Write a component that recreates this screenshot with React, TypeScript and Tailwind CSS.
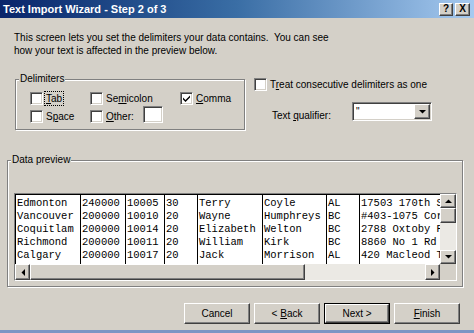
import React from "react"

const rows = [
  ["Edmonton", "240000", "10005", "30", "Terry", "Coyle", "AL", "17503 170th St"],
  ["Vancouver", "200000", "10010", "20", "Wayne", "Humphreys", "BC", "#403-1075 Cornwall"],
  ["Coquitlam", "200000", "10014", "20", "Elizabeth", "Welton", "BC", "2788 Oxtoby Pl"],
  ["Richmond", "200000", "10011", "20", "William", "Kirk", "BC", "8860 No 1 Rd"],
  ["Calgary", "200000", "10017", "20", "Jack", "Morrison", "AL", "420 Macleod Tr"],
]

const colWidths = ["w-[65px]", "w-[45px]", "w-[39px]", "w-[33px]", "w-[65px]", "w-[64px]", "w-[33px]", "flex-1"]

const raised =
  "bg-[#d4d0c8] border border-t-white border-l-white border-r-[#404040] border-b-[#404040] shadow-[inset_-1px_-1px_0_#808080]"

function Check({ checked }: { checked?: boolean }) {
  return (
    <span className="w-[13px] h-[13px] shrink-0 bg-white border border-t-[#808080] border-l-[#808080] border-r-white border-b-white shadow-[inset_1px_1px_0_#404040,inset_-1px_-1px_0_#d4d0c8] flex items-center justify-center">
      {checked && (
        <svg width="7" height="7" viewBox="0 0 7 7">
          <path d="M0 2.5 L2.5 5 L7 0.5 L7 2.5 L2.5 7 L0 4.5 Z" fill="#000" />
        </svg>
      )}
    </span>
  )
}

function Arrow({ dir }: { dir: "up" | "down" | "left" | "right" }) {
  const pts = {
    up: "0,4 7,4 3.5,0.5",
    down: "0,0 7,0 3.5,3.5",
    left: "4,0 4,7 0.5,3.5",
    right: "0,0 0,7 3.5,3.5",
  }[dir]
  const vertical = dir === "up" || dir === "down"
  return (
    <svg width={vertical ? 7 : 4} height={vertical ? 4 : 7} viewBox={vertical ? "0 0 7 4" : "0 0 4 7"}>
      <polygon points={pts} fill="#000" />
    </svg>
  )
}

function GroupLabel({ children }: { children: React.ReactNode }) {
  return (
    <span className="absolute -top-[8px] left-[3px] px-[1px] bg-[#d4d0c8] leading-[13px]">{children}</span>
  )
}

export default function App() {
  return (
    <div className="w-[474px] h-[333px] bg-[#d4d0c8] overflow-hidden flex flex-col text-black text-[10px] font-['Liberation_Sans',Arial,sans-serif]">
      {/* Title bar */}
      <div className="h-[18px] shrink-0 flex items-center pl-[3px] pr-[4px] bg-linear-to-r from-[#0a246a] via-[#3a6ea5] to-[#a6caf0]">
        <span className="flex-1 text-white font-bold text-[11px] leading-none">Text Import Wizard - Step 2 of 3</span>
        <span className={`w-[14px] h-[13px] flex items-center justify-center font-bold text-[10px] leading-none ${raised}`}>?</span>
        <span className={`ml-[2px] w-[15px] h-[13px] flex items-center justify-center font-bold text-[10px] leading-none ${raised}`}>X</span>
      </div>

      <p className="mt-[13px] ml-[14px] leading-[13px]">
        This screen lets you set the delimiters your data contains.&nbsp; You can see
        <br />
        how your text is affected in the preview below.
      </p>

      {/* Delimiters + options */}
      <div className="mt-[21px] flex items-start">
        <div className="relative ml-[15px] mt-[1px] w-[230px] h-[51px] border border-[#808080] shadow-[inset_1px_1px_0_#fff,1px_1px_0_#fff]">
          <GroupLabel>Delimiters</GroupLabel>
          <div className="pt-[12px] pl-[14px] leading-[13px]">
            <div className="flex items-center h-[13px]">
              <div className="w-[60px] flex items-center gap-[2px]">
                <Check />
                <span className="px-[1px] outline outline-1 outline-dotted outline-black">
                  <span className="underline">T</span>ab
                </span>
              </div>
              <div className="w-[90px] flex items-center gap-[3px]">
                <Check />
                <span>
                  Se<span className="underline">m</span>icolon
                </span>
              </div>
              <div className="flex items-center gap-[3px]">
                <Check checked />
                <span>
                  <span className="underline">C</span>omma
                </span>
              </div>
            </div>
            <div className="mt-[1px] flex items-end h-[17px]">
              <div className="w-[60px] flex items-center gap-[3px]">
                <Check />
                <span>
                  S<span className="underline">p</span>ace
                </span>
              </div>
              <div className="flex items-end gap-[3px]">
                <Check />
                <span>
                  <span className="underline">O</span>ther:
                </span>
                <span className="ml-[6px] w-[20px] h-[17px] bg-white border border-t-[#808080] border-l-[#808080] border-r-white border-b-white shadow-[inset_1px_1px_0_#404040,inset_-1px_-1px_0_#d4d0c8]" />
              </div>
            </div>
          </div>
        </div>

        <div className="ml-[9px] flex flex-col">
          <div className="flex items-center gap-[3px] h-[13px] leading-[13px]">
            <Check />
            <span>
              T<span className="underline">r</span>eat consecutive delimiters as one
            </span>
          </div>
          <div className="mt-[11px] ml-[18px] flex items-end">
            <span className="w-[80px] leading-[13px] mb-[-1px]">
              Text <span className="underline">q</span>ualifier:
            </span>
            <div className="w-[80px] h-[19px] bg-white flex items-center border border-t-[#808080] border-l-[#808080] border-r-white border-b-white shadow-[inset_1px_1px_0_#404040,inset_-1px_-1px_0_#d4d0c8] pl-[3px] pr-[1px]">
              <span className="flex-1 leading-none">"</span>
              <span className={`w-[16px] h-[15px] flex items-center justify-center ${raised}`}>
                <Arrow dir="down" />
              </span>
            </div>
          </div>
        </div>
      </div>

      {/* Data preview */}
      <div className="relative mt-[30px] ml-[7px] w-[456px] h-[127px] border border-[#808080] shadow-[inset_1px_1px_0_#fff,1px_1px_0_#fff] pt-[32px] pl-[6px]">
        <GroupLabel>Data preview</GroupLabel>
        <div className="w-[443px] h-[88px] border border-t-[#808080] border-l-[#808080] border-r-white border-b-white flex flex-col">
          <div className="flex h-[70px]">
            <div className="w-[425px] h-[70px] bg-white border-t border-black flex overflow-hidden font-['Liberation_Mono','Courier_New',monospace] text-[10.5px] leading-[13px]">
              {colWidths.map((w, ci) => (
                <div key={ci} className={`${w} shrink-0 border-l border-black pt-[2px] pl-[1px] whitespace-nowrap overflow-hidden`}>
                  {rows.map((r, ri) => (
                    <div key={ri}>{r[ci]}</div>
                  ))}
                </div>
              ))}
            </div>
            <div className="w-[16px] h-[70px] flex flex-col bg-[#ebe9e4]">
              <span className={`h-[14px] flex items-center justify-center ${raised}`}>
                <Arrow dir="up" />
              </span>
              <span className={`h-[15px] ${raised}`} />
              <span className="flex-1" />
              <span className={`h-[14px] flex items-center justify-center ${raised}`}>
                <Arrow dir="down" />
              </span>
            </div>
          </div>
          <div className="flex h-[16px]">
            <div className="w-[425px] flex bg-[#ebe9e4]">
              <span className={`w-[15px] flex items-center justify-center ${raised}`}>
                <Arrow dir="left" />
              </span>
              <span className={`w-[275px] ${raised}`} />
              <span className="flex-1" />
              <span className={`w-[15px] flex items-center justify-center ${raised}`}>
                <Arrow dir="right" />
              </span>
            </div>
            <div className="flex-1 bg-[#d4d0c8]" />
          </div>
        </div>
      </div>

      {/* Buttons */}
      <div className="mt-[16px] flex justify-end gap-[4px] pr-[14px]">
        <button className={`w-[66px] h-[21px] flex items-center justify-center ${raised}`}>Cancel</button>
        <button className={`w-[66px] h-[21px] flex items-center justify-center ${raised}`}>
          &lt; <span className="underline ml-[3px]">B</span>ack
        </button>
        <button className="w-[66px] h-[21px] border border-black">
          <span className={`w-full h-full flex items-center justify-center ${raised}`}>Next &gt;</span>
        </button>
        <button className={`w-[66px] h-[21px] flex items-center justify-center ${raised}`}>
          <span className="underline">F</span>inish
        </button>
      </div>

      <div className="mt-auto h-[3px] bg-[#7c95c4]" />
    </div>
  )
}
